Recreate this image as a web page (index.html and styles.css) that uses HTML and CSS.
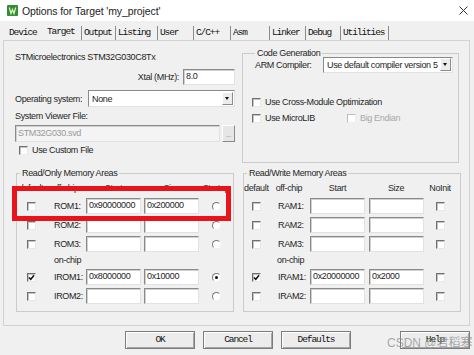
FILE: index.html
```html
<!DOCTYPE html>
<html>
<head>
<meta charset="utf-8">
<title>Options for Target 'my_project'</title>
<link rel="stylesheet" href="styles.css">
</head>
<body>
<div class="window">
	<div class="titlebar">
		<svg class="appicon" viewBox="0 0 11 11"><rect width="11" height="11" rx="1" fill="#2f8f34"/><path d="M2.3 2.5 L4 8.5 L5.5 4.5 L7 8.5 L8.7 2.5" fill="none" stroke="#e4f3c8" stroke-width="1.2"/></svg>
		<span class="title">Options for Target 'my_project'</span>
		<svg class="close" viewBox="0 0 9 9"><path d="M0.5 0.5 L8.5 8.5 M8.5 0.5 L0.5 8.5" stroke="#333" stroke-width="1"/></svg>
	</div>

	<div class="tabs">
		<span class="tab">Device</span>
		<span class="tab active">Target</span>
		<span class="tab sep">Output</span>
		<span class="tab sep">Listing</span>
		<span class="tab sep">User</span>
		<span class="tab sep">C/C++</span>
		<span class="tab sep">Asm</span>
		<span class="tab sep">Linker</span>
		<span class="tab sep">Debug</span>
		<span class="tab sep last">Utilities</span>
	</div>

	<div class="panel">
		<div class="top">
			<div class="device">
				<div class="chip">STMicroelectronics STM32G030C8Tx</div>
				<div class="xtal">
					<span class="xtal-label">Xtal (MHz):</span>
					<span class="edit xtal-edit">8.0</span>
				</div>
				<div class="os">
					<span class="os-label">Operating system:</span>
					<span class="combo"><span class="val">None</span><i class="drop"></i></span>
				</div>
				<div class="svf-label">System Viewer File:</div>
				<div class="svf">
					<span class="edit disabled">STM32G030.svd</span>
					<span class="browse">...</span>
				</div>
				<div class="custom"><span class="cb"></span>Use Custom File</div>
			</div>

			<fieldset class="group codegen">
				<legend>Code Generation</legend>
				<div class="arm">
					<span class="arm-label">ARM Compiler:</span>
					<span class="combo arm-combo"><span class="val">Use default compiler version 5</span><i class="drop"></i></span>
				</div>
				<div class="opt-row cross"><span class="cb"></span>Use Cross-Module Optimization</div>
				<div class="opt-row micro">
					<span class="opt"><span class="cb"></span>Use MicroLIB</span>
					<span class="opt off"><span class="cb"></span>Big Endian</span>
				</div>
			</fieldset>
		</div>

		<div class="mem">
			<fieldset class="group rom">
				<legend>Read/Only Memory Areas</legend>
				<div class="mem-grid">
					<span class="hd">default</span><span class="hd">off-chip</span><span class="hd">Start</span><span class="hd size">Size</span><span class="hd">Startup</span>

					<span class="cb"></span><span class="name">ROM1:</span><span class="edit">0x90000000</span><span class="edit size">0x200000</span><span class="radio"></span>
					<span class="cb"></span><span class="name">ROM2:</span><span class="edit"></span><span class="edit size"></span><span class="radio"></span>
					<span class="cb"></span><span class="name">ROM3:</span><span class="edit"></span><span class="edit size"></span><span class="radio"></span>

					<span class="onchip">on-chip</span>
					<span class="cb checked"><svg viewBox="0 0 7 7"><path d="M1 3.4 L2.8 5.3 L6 1.3" fill="none" stroke="#111" stroke-width="1.5"/></svg></span><span class="name">IROM1:</span><span class="edit">0x8000000</span><span class="edit size">0x10000</span><span class="radio on"></span>
					<span class="cb"></span><span class="name">IROM2:</span><span class="edit"></span><span class="edit size"></span><span class="radio"></span>
				</div>
			</fieldset>

			<fieldset class="group ram">
				<legend>Read/Write Memory Areas</legend>
				<div class="mem-grid">
					<span class="hd">default</span><span class="hd">off-chip</span><span class="hd">Start</span><span class="hd size">Size</span><span class="hd">NoInit</span>

					<span class="cb"></span><span class="name">RAM1:</span><span class="edit"></span><span class="edit size"></span><span class="cb"></span>
					<span class="cb"></span><span class="name">RAM2:</span><span class="edit"></span><span class="edit size"></span><span class="cb"></span>
					<span class="cb"></span><span class="name">RAM3:</span><span class="edit"></span><span class="edit size"></span><span class="cb"></span>

					<span class="onchip">on-chip</span>
					<span class="cb checked"><svg viewBox="0 0 7 7"><path d="M1 3.4 L2.8 5.3 L6 1.3" fill="none" stroke="#111" stroke-width="1.5"/></svg></span><span class="name">IRAM1:</span><span class="edit">0x20000000</span><span class="edit size">0x2000</span><span class="cb"></span>
					<span class="cb"></span><span class="name">IRAM2:</span><span class="edit"></span><span class="edit size"></span><span class="cb"></span>
				</div>
			</fieldset>
		</div>
	</div>

	<div class="buttons">
		<span class="btn">OK</span>
		<span class="btn">Cancel</span>
		<span class="btn">Defaults</span>
		<span class="btn help">Help</span>
	</div>

	<div class="highlight"></div>
	<div class="watermark">CSDN @君稻寒</div>
</div>
</body>
</html>
```

FILE: styles.css
```css
* {
	box-sizing : border-box;
}

html, body {
	margin : 0;
}

body {
	width       : 474px;
	height      : 355px;
	overflow    : hidden;
	background  : #f0f0f0;
	font-family : "Liberation Sans", Arial, sans-serif;
	font-size   : 9px;
	letter-spacing : -0.35px;
	color       : #1e1e1e;
}

.window {
	position : relative;
	height   : 355px;
}

/* title bar */

.titlebar {
	display     : flex;
	align-items : center;
	height      : 21px;
	background  : #fff;
}

.appicon {
	width       : 11px;
	height      : 11px;
	margin-left : 7px;
}

.title {
	margin-left    : 4px;
	font-size      : 10.5px;
	letter-spacing : -0.1px;
	color          : #222;
}

.close {
	width        : 9px;
	height       : 9px;
	margin-left  : auto;
	margin-right : 6px;
}

/* tabs */

.tabs {
	display : grid;
	grid-template-columns : 38px 38px 34px 42px 36px 37px 39px 36px 35px 49px;
	align-items  : end;
	height       : 19px;
	padding-left : 5px;
	font-family  : "Liberation Mono", monospace;
	font-size    : 9.5px;
	letter-spacing : -1.1px;
	color        : #111;
}

.tab {
	height       : 14px;
	line-height  : 14px;
	padding-left : 4px;
}

.tab.sep {
	border-left  : 1px solid #8c8c8c;
	padding-left : 2px;
}

.tab.last {
	border-right : 1px solid #8c8c8c;
}

.tab.active {
	line-height : 11px;
}

/* main panel */

.panel {
	height       : 286px;
	margin       : 0 4px 0 3px;
	border       : 1px solid #d2d2d2;
	padding-left : 11px;
}

.top {
	display : flex;
}

.device {
	width       : 220px;
	padding-top : 10px;
}

.chip {
	line-height : 12px;
}

.xtal {
	display         : flex;
	align-items     : center;
	justify-content : flex-end;
	height          : 16px;
	margin-top      : 6px;
}

.xtal-label {
	margin-right : 4px;
}

.xtal-edit {
	width : 52px;
}

.os {
	display     : flex;
	align-items : center;
	height      : 17px;
	margin-top  : 5px;
}

.os-label {
	width : 73px;
}

.os .combo {
	flex : 1;
}

.svf-label {
	margin-top  : 3px;
	line-height : 12px;
}

.svf {
	display    : flex;
	gap        : 2px;
	height     : 17px;
	margin-top : 3px;
}

.svf .edit {
	flex   : 1;
	height : 17px;
}

.browse {
	width       : 13px;
	height      : 17px;
	border      : 1px solid;
	border-color: #fff #8a8a8a #8a8a8a #fff;
	background  : #e6e6e6;
	color       : #888;
	font-size   : 7px;
	line-height : 17px;
	text-align  : center;
}

.custom {
	display      : flex;
	align-items  : center;
	height       : 12px;
	margin-top   : 2px;
	padding-left : 4px;
}

.custom .cb {
	margin-right : 4px;
}

/* controls */

.edit {
	display      : block;
	height       : 16px;
	background   : #fff;
	border       : 1px solid;
	border-color : #8a8a8a #e2e2e2 #e2e2e2 #8a8a8a;
	box-shadow   : inset 1px 1px 0 #d0d0d0;
	padding      : 1px 2px;
	line-height  : 11px;
	white-space  : nowrap;
	overflow     : hidden;
}

.edit.disabled {
	background : #f4f4f4;
	color      : #9a9a9a;
	padding    : 2px 2px;
}

.combo {
	display      : flex;
	align-items  : center;
	height       : 17px;
	background   : #fff;
	border       : 1px solid;
	border-color : #8a8a8a #e2e2e2 #e2e2e2 #8a8a8a;
	padding-left : 3px;
	white-space  : nowrap;
}

.combo .val {
	flex     : 1;
	overflow : hidden;
}

.drop {
	position     : relative;
	flex-shrink  : 0;
	width        : 11px;
	height       : 13px;
	margin-left  : 2px;
	margin-right : 1px;
	border       : 1px solid;
	border-color : #fff #8a8a8a #8a8a8a #fff;
	background   : #ececec;
}

.drop::after {
	content      : "";
	position     : absolute;
	left         : 2px;
	top          : 4px;
	border-left  : 2.5px solid transparent;
	border-right : 2.5px solid transparent;
	border-top   : 3px solid #111;
}

.cb {
	display      : block;
	width        : 9px;
	height       : 9px;
	background   : #fff;
	border       : 1px solid;
	border-color : #6f6f6f #e8e8e8 #e8e8e8 #6f6f6f;
	box-shadow   : inset 1px 1px 0 #c4c4c4;
	flex-shrink  : 0;
}

.cb svg {
	display : block;
	width   : 7px;
	height  : 7px;
}

.radio {
	position     : relative;
	display      : block;
	width        : 9px;
	height       : 9px;
	border-radius: 50%;
	background   : #fff;
	border       : 1px solid;
	border-color : #7a7a7a #f4f4f4 #f4f4f4 #7a7a7a;
}

.radio.on::after {
	content       : "";
	position      : absolute;
	left          : 2px;
	top           : 2px;
	width         : 3px;
	height        : 3px;
	border-radius : 50%;
	background    : #111;
}

/* group boxes */

.group {
	margin    : 0;
	padding   : 0;
	min-width : 0;
	border    : 1px solid #cbcbcb;
}

.group legend {
	margin-left : 3px;
	padding     : 0 2px;
	line-height : 12px;
}

.codegen {
	width        : 217px;
	height       : 116px;
	margin       : 6px 0 0 7px;
	padding-left : 9px;
}

.arm {
	display     : flex;
	align-items : center;
	height      : 15px;
	margin-top  : -2px;
}

.arm-label {
	width       : 68px;
	margin-left : 3px;
}

.arm-combo {
	width  : 130px;
	height : 16px;
}

.opt-row {
	display     : flex;
	align-items : center;
	height      : 12px;
}

.opt-row .cb {
	margin-right : 4px;
}

.cross {
	margin-top : 24px;
}

.micro {
	margin-top : 4px;
}

.opt {
	display     : flex;
	align-items : center;
	width       : 95px;
}

.opt.off {
	color : #a8a8a8;
}

.opt.off .cb {
	border-color : #bdbdbd #eee #eee #bdbdbd;
	box-shadow   : none;
}

/* memory areas */

.mem {
	display    : flex;
	margin-top : 4px;
}

.rom, .ram {
	width  : 218px;
	height : 145px;
}

.rom {
	margin-left : 1px;
}

.ram {
	margin-left : 9px;
}

.mem-grid {
	display            : grid;
	grid-template-rows : 14px 16px 16px 16px 11px 16px 16px;
	row-gap            : 3px;
	align-items        : center;
	padding-top        : 2px;
}

.rom .mem-grid {
	grid-template-columns : 28px 41px 55px 58px 34px;
}

.ram .mem-grid {
	grid-template-columns : 24px 42px 55px 59px 32px;
}

.hd {
	text-align : center;
	color      : #2a2a2a;
}

.hd.size {
	padding-left : 3px;
}

.mem-grid .cb,
.mem-grid .radio {
	justify-self : center;
}

.name {
	padding-left : 9px;
}

.ram .name {
	padding-left : 10px;
}

.mem-grid .edit {
	width : 55px;
}

.mem-grid .edit.size {
	justify-self : end;
}

.onchip {
	grid-column  : 2 / -1;
	align-self   : end;
	padding-left : 9px;
	line-height  : 11px;
}

/* buttons */

.buttons {
	display      : flex;
	gap          : 8px;
	margin-top   : 5px;
	padding-left : 125px;
}

.btn {
	width        : 70px;
	height       : 18px;
	border       : 1px solid #7c7c7c;
	background   : #ececec;
	box-shadow   : inset 1px 1px 0 #fff, inset -1px -1px 0 #a6a6a6;
	font-family  : "Liberation Mono", monospace;
	font-size    : 9.5px;
	letter-spacing : -1.1px;
	line-height  : 16px;
	text-align   : center;
	color        : #111;
}

.btn.help {
	margin-left  : auto;
	margin-right : 4px;
}

/* overlays */

.highlight {
	position : absolute;
	left     : 12px;
	top      : 186px;
	width    : 219px;
	height   : 35px;
	border   : 5px solid #e8141c;
}

.watermark {
	position    : absolute;
	left        : 387px;
	top         : 333px;
	font-family : "Liberation Sans", "Noto Sans CJK SC", sans-serif;
	font-size   : 12px;
	letter-spacing : 0;
	color       : rgba(140, 140, 140, 0.75);
}
```
